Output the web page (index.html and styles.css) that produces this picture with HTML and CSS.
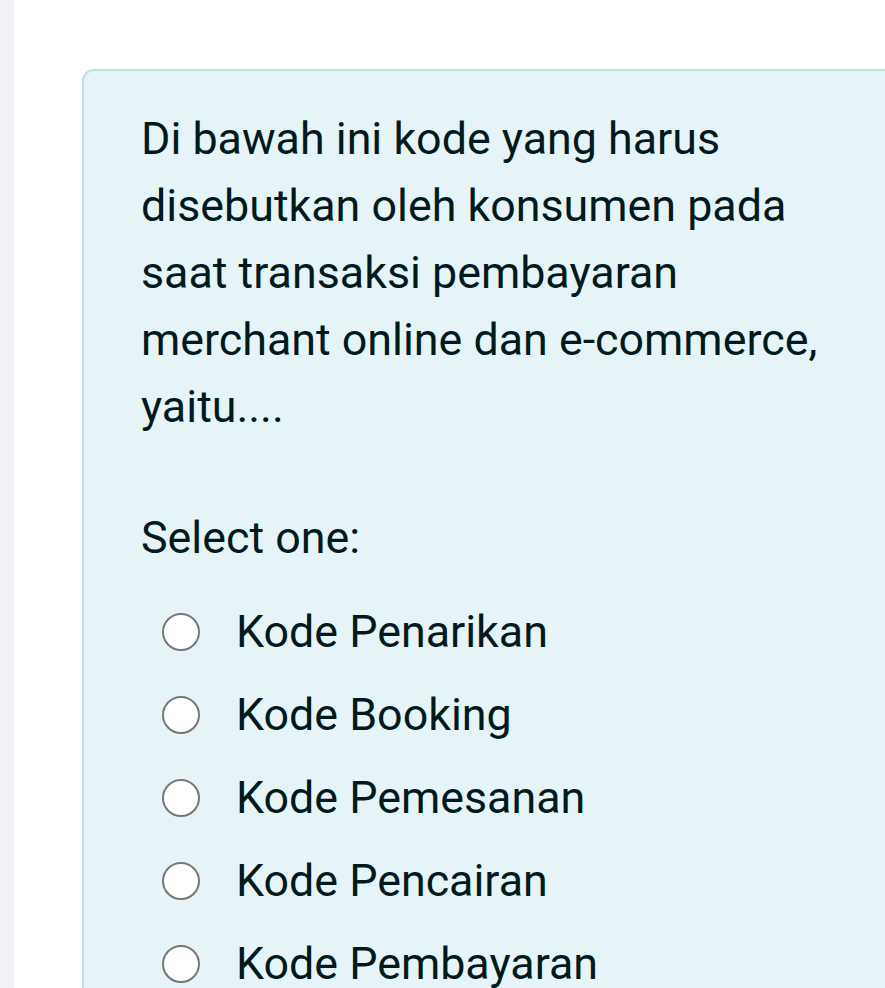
FILE: index.html
```html
<!DOCTYPE html>
<html>
<head>
<meta charset="utf-8">
<link rel="stylesheet" href="styles.css">
</head>
<body>
<div class="page">
  <div class="drawer"></div>
  <main class="main">
    <div class="formulation">
      <div class="qtext">Di bawah ini kode yang harus disebutkan oleh konsumen pada saat transaksi pembayaran merchant online dan e-commerce, yaitu....</div>
      <div class="prompt">Select one:</div>
      <div class="answers">
        <label class="opt"><span class="radio"></span><span class="label">Kode Penarikan</span></label>
        <label class="opt"><span class="radio"></span><span class="label">Kode Booking</span></label>
        <label class="opt"><span class="radio"></span><span class="label">Kode Pemesanan</span></label>
        <label class="opt"><span class="radio"></span><span class="label">Kode Pencairan</span></label>
        <label class="opt"><span class="radio"></span><span class="label">Kode Pembayaran</span></label>
      </div>
    </div>
  </main>
</div>
</body>
</html>
```

FILE: styles.css
```css
html, body {
  margin: 0;
  padding: 0;
  background: #ffffff;
  overflow: hidden;
  height: 988px;
}
.page {
  display: flex;
  height: 988px;
  font-family: Roboto, "Noto Sans", sans-serif;
  color: #001a1e;
}
.drawer {
  width: 14px;
  flex: none;
  background: #f0f2f7;
}
.main {
  flex: 1;
  padding: 69px 0 0 68px;
  min-width: 0;
}
.formulation {
  background: #e7f4f7;
  border: 2px solid #bde1e6;
  border-right: none;
  border-bottom: none;
  border-radius: 12px 0 0 0;
  padding: 34px 20px 40px 57px;
  width: 830px;
  box-sizing: border-box;
  height: 960px;
}
.qtext {
  font-size: 44.8px;
  line-height: 67px;
  width: 700px;
}
.prompt {
  font-size: 44.8px;
  line-height: 67px;
  margin-top: 64px;
}
.answers {
  display: flex;
  flex-direction: column;
  gap: 16px;
  margin-top: 27px;
  padding-left: 21px;
}
.opt {
  display: flex;
  align-items: center;
  gap: 36px;
  font-size: 44.8px;
  line-height: 67px;
}
.radio {
  width: 34px;
  height: 34px;
  border: 2.5px solid #777777;
  border-radius: 50%;
  background: #ffffff;
  flex: none;
}
```
